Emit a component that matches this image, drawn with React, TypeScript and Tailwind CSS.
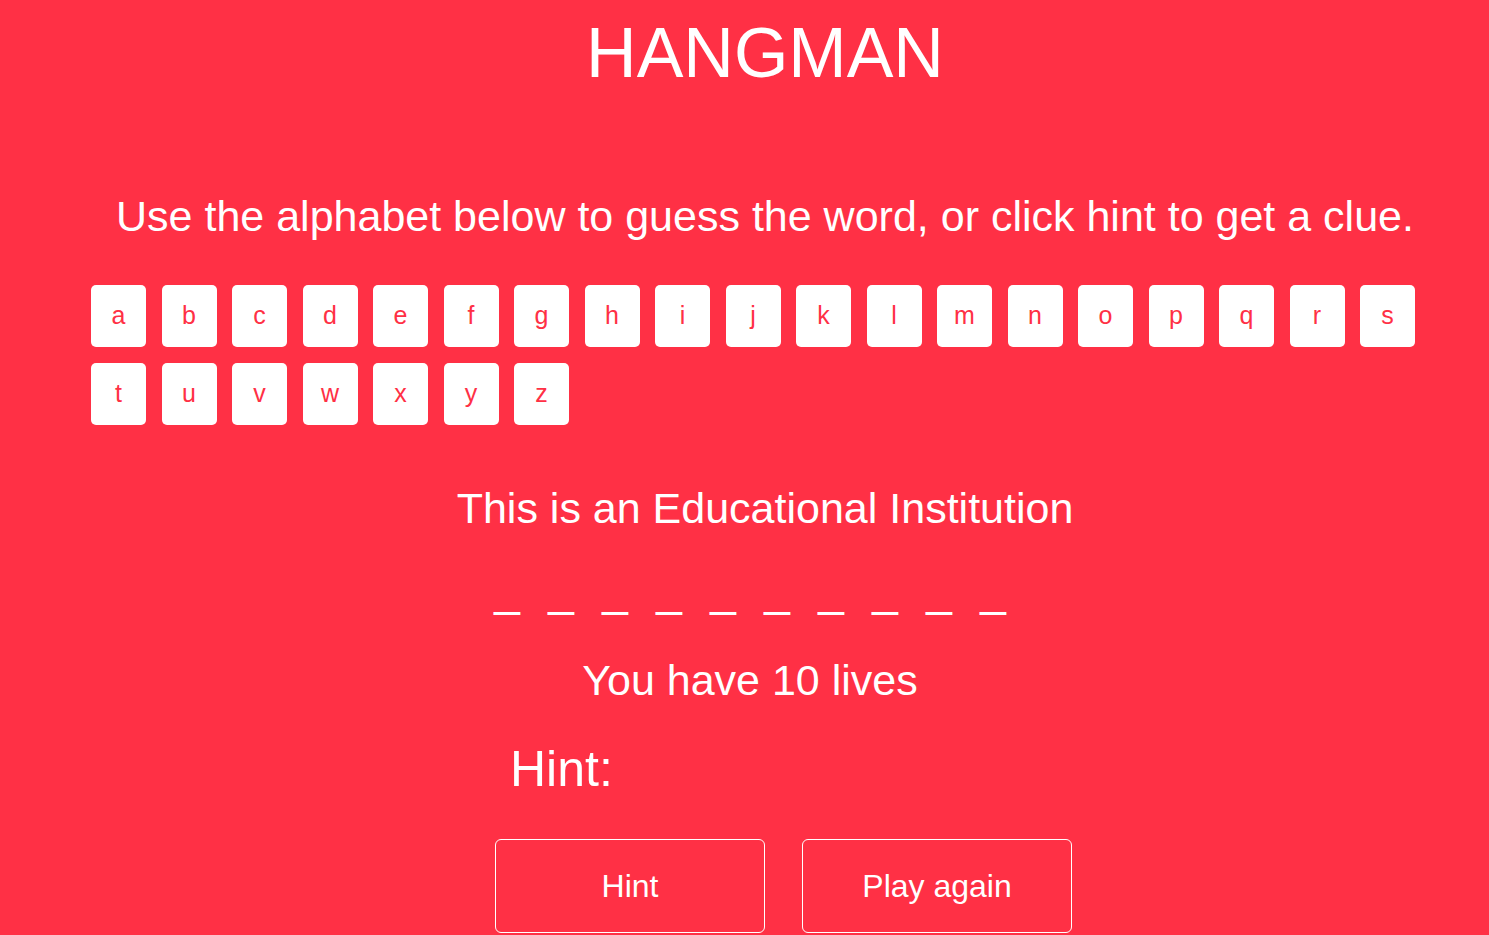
import { useState } from "react";

const alphabet = "abcdefghijklmnopqrstuvwxyz".split("");
const word = "university";

export default function App() {
  const [guessed, setGuessed] = useState<string[]>([]);
  const [lives, setLives] = useState(10);
  const [hint, setHint] = useState("");

  const guess = (l: string) => {
    if (guessed.includes(l)) return;
    setGuessed([...guessed, l]);
    if (!word.includes(l)) setLives(lives - 1);
  };

  const reset = () => {
    setGuessed([]);
    setLives(10);
    setHint("");
  };

  return (
    <div className="min-h-[935px] w-full bg-[#ff3045] text-white font-['Liberation_Sans',Arial,sans-serif]">
      <h1 className="pt-[13px] pl-[41px] text-center text-[70px] leading-[80px] font-normal">
        HANGMAN
      </h1>

      <p className="mt-[98px] pl-[41px] text-center text-[43px] leading-[50px]">
        Use the alphabet below to guess the word, or click hint to get a clue.
      </p>

      <ul className="mt-[44px] ml-[91px] flex w-[1340px] flex-wrap gap-x-[15.5px] gap-y-[16px]">
        {alphabet.map((l) => (
          <li key={l}>
            <button
              onClick={() => guess(l)}
              className={`flex h-[62px] w-[55px] items-center justify-center rounded-[5px] bg-white text-[25px] text-[#ff3045] ${
                guessed.includes(l) ? "opacity-40" : ""
              }`}
            >
              {l}
            </button>
          </li>
        ))}
      </ul>

      <p className="mt-[58px] pl-[41px] text-center text-[43px] leading-[50px]">
        This is an Educational Institution
      </p>

      <ul className="mt-[32px] pl-[11px] flex justify-center gap-x-[28px] text-[46px] leading-[50px]">
        {word.split("").map((c, i) => (
          <li key={i} className="w-[26px] text-center">
            {guessed.includes(c) ? c : "_"}
          </li>
        ))}
      </ul>

      <p className="mt-[40px] pl-[11px] text-center text-[43px] leading-[50px]">
        You have {lives} lives
      </p>

      <p className="mt-[36px] pl-[510px] text-[50px] leading-[56px]">Hint: {hint}</p>

      <div className="mt-[42px] pl-[78px] flex justify-center gap-x-[37px]">
        <button
          onClick={() => setHint("A place of higher learning")}
          className="h-[94px] w-[270px] rounded-[6px] border border-white text-[32px]"
        >
          Hint
        </button>
        <button
          onClick={reset}
          className="h-[94px] w-[270px] rounded-[6px] border border-white text-[32px]"
        >
          Play again
        </button>
      </div>
    </div>
  );
}
